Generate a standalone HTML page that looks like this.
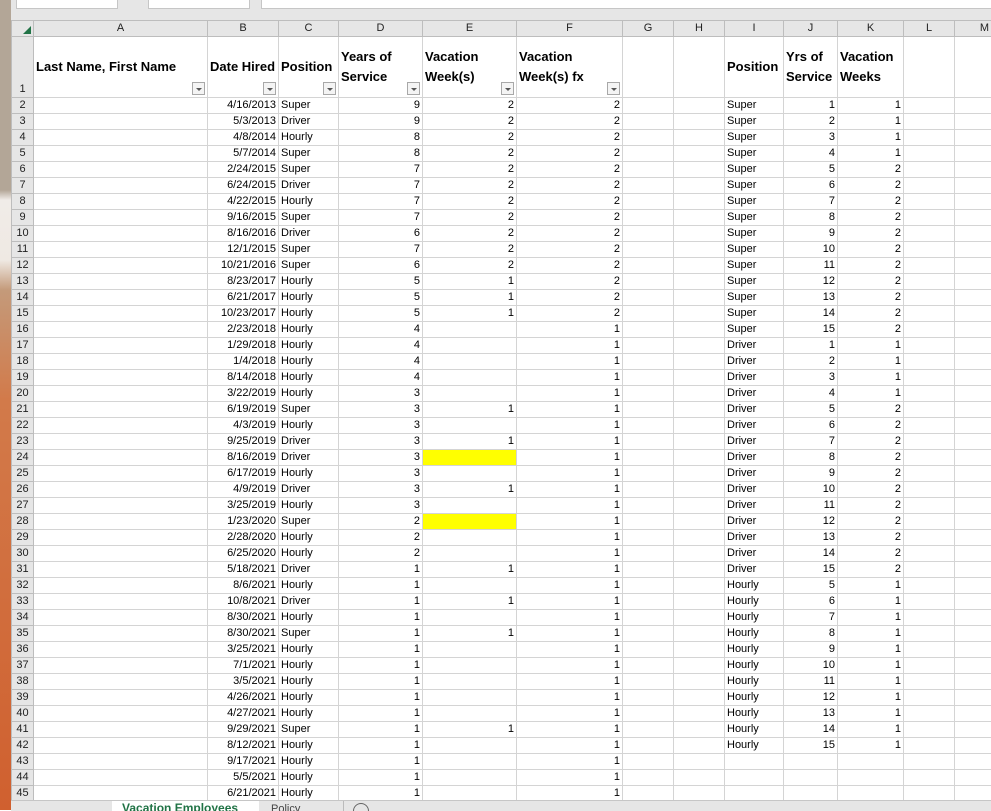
<!DOCTYPE html>
<html><head><meta charset="utf-8"><style>
body{margin:0;width:991px;height:810px;overflow:hidden;background:#fff;font-family:"Liberation Sans",Arial,sans-serif;position:relative}
.lstrip{position:absolute;left:0;top:0;width:11px;height:810px;background:linear-gradient(#b3a697 0,#b3a697 190px,#f0ece8 200px,#efe9e3 260px,#c49a7a 290px,#d27a4a 400px,#d0602f 810px)}
.top{position:absolute;left:11px;top:0;width:980px;height:20px;background:#e6e6e6}
.box{position:absolute;top:0;height:8px;background:#fff;border:1px solid #c6c6c6;border-top:none}
table{position:absolute;left:11px;top:20px;width:1003px;border-collapse:collapse;table-layout:fixed;font-size:11px;color:#000}
td{border:1px solid #d4d4d4;height:15px;padding:0 2px;white-space:nowrap;overflow:hidden;line-height:15px}
tr.ch td{background:#e6e6e6;text-align:center;border-color:#bdbdbd;color:#222}
td.rh{background:#e6e6e6;text-align:center;border-color:#bdbdbd;color:#222;padding:0}
tr.h1 td{height:60px;font-weight:bold;font-size:13px;line-height:20px;vertical-align:middle;position:relative}
.r{text-align:right}
.y{background:#ffff00}
.dd{position:absolute;right:2px;bottom:2px;width:13px;height:13px;border:1px solid #a8a8a8;background:#f4f4f4;box-sizing:border-box}
.dd:after{content:"";position:absolute;left:3px;top:5px;border-left:3px solid transparent;border-right:3px solid transparent;border-top:3px solid #555}
.tabs{position:absolute;left:11px;top:800px;width:980px;height:10px;background:#e6e6e6;border-top:1px solid #c6c6c6;overflow:hidden}
.tab{position:absolute;left:101px;top:-1px;width:147px;height:11px;background:#fff;color:#217346;font-weight:bold;font-size:12px;line-height:16px;padding-left:10px;box-sizing:border-box;overflow:hidden}
</style></head><body>
<div class="lstrip"></div>
<div class="top"><div class="box" style="left:5px;width:100px"></div><div class="box" style="left:137px;width:100px"></div><div class="box" style="left:250px;width:740px"></div></div>
<table>
<colgroup><col style="width:22px"><col style="width:174px"><col style="width:71px"><col style="width:60px"><col style="width:84px"><col style="width:94px"><col style="width:106px"><col style="width:51px"><col style="width:51px"><col style="width:59px"><col style="width:54px"><col style="width:66px"><col style="width:51px"><col style="width:60px"></colgroup>
<tr class="ch"><td style="position:relative"><span style="position:absolute;right:2px;bottom:2px;border-left:8px solid transparent;border-bottom:8px solid #217346"></span></td><td>A</td><td>B</td><td>C</td><td>D</td><td>E</td><td>F</td><td>G</td><td>H</td><td>I</td><td>J</td><td>K</td><td>L</td><td>M</td></tr>
<tr class="h1"><td class="rh" style="vertical-align:bottom;font-weight:normal;font-size:11px;line-height:15px">1</td><td>Last Name, First Name<span class="dd"></span></td><td>Date Hired<span class="dd"></span></td><td>Position<span class="dd"></span></td><td>Years of<br>Service<span class="dd"></span></td><td>Vacation<br>Week(s)<span class="dd"></span></td><td>Vacation<br>Week(s) fx<span class="dd"></span></td><td></td><td></td><td>Position</td><td>Yrs of<br>Service</td><td>Vacation<br>Weeks</td><td></td><td></td></tr>
<tr><td class="rh">2</td><td></td><td class="r">4/16/2013</td><td>Super</td><td class="r">9</td><td class="r">2</td><td class="r">2</td><td></td><td></td><td>Super</td><td class="r">1</td><td class="r">1</td><td></td><td></td></tr>
<tr><td class="rh">3</td><td></td><td class="r">5/3/2013</td><td>Driver</td><td class="r">9</td><td class="r">2</td><td class="r">2</td><td></td><td></td><td>Super</td><td class="r">2</td><td class="r">1</td><td></td><td></td></tr>
<tr><td class="rh">4</td><td></td><td class="r">4/8/2014</td><td>Hourly</td><td class="r">8</td><td class="r">2</td><td class="r">2</td><td></td><td></td><td>Super</td><td class="r">3</td><td class="r">1</td><td></td><td></td></tr>
<tr><td class="rh">5</td><td></td><td class="r">5/7/2014</td><td>Super</td><td class="r">8</td><td class="r">2</td><td class="r">2</td><td></td><td></td><td>Super</td><td class="r">4</td><td class="r">1</td><td></td><td></td></tr>
<tr><td class="rh">6</td><td></td><td class="r">2/24/2015</td><td>Super</td><td class="r">7</td><td class="r">2</td><td class="r">2</td><td></td><td></td><td>Super</td><td class="r">5</td><td class="r">2</td><td></td><td></td></tr>
<tr><td class="rh">7</td><td></td><td class="r">6/24/2015</td><td>Driver</td><td class="r">7</td><td class="r">2</td><td class="r">2</td><td></td><td></td><td>Super</td><td class="r">6</td><td class="r">2</td><td></td><td></td></tr>
<tr><td class="rh">8</td><td></td><td class="r">4/22/2015</td><td>Hourly</td><td class="r">7</td><td class="r">2</td><td class="r">2</td><td></td><td></td><td>Super</td><td class="r">7</td><td class="r">2</td><td></td><td></td></tr>
<tr><td class="rh">9</td><td></td><td class="r">9/16/2015</td><td>Super</td><td class="r">7</td><td class="r">2</td><td class="r">2</td><td></td><td></td><td>Super</td><td class="r">8</td><td class="r">2</td><td></td><td></td></tr>
<tr><td class="rh">10</td><td></td><td class="r">8/16/2016</td><td>Driver</td><td class="r">6</td><td class="r">2</td><td class="r">2</td><td></td><td></td><td>Super</td><td class="r">9</td><td class="r">2</td><td></td><td></td></tr>
<tr><td class="rh">11</td><td></td><td class="r">12/1/2015</td><td>Super</td><td class="r">7</td><td class="r">2</td><td class="r">2</td><td></td><td></td><td>Super</td><td class="r">10</td><td class="r">2</td><td></td><td></td></tr>
<tr><td class="rh">12</td><td></td><td class="r">10/21/2016</td><td>Super</td><td class="r">6</td><td class="r">2</td><td class="r">2</td><td></td><td></td><td>Super</td><td class="r">11</td><td class="r">2</td><td></td><td></td></tr>
<tr><td class="rh">13</td><td></td><td class="r">8/23/2017</td><td>Hourly</td><td class="r">5</td><td class="r">1</td><td class="r">2</td><td></td><td></td><td>Super</td><td class="r">12</td><td class="r">2</td><td></td><td></td></tr>
<tr><td class="rh">14</td><td></td><td class="r">6/21/2017</td><td>Hourly</td><td class="r">5</td><td class="r">1</td><td class="r">2</td><td></td><td></td><td>Super</td><td class="r">13</td><td class="r">2</td><td></td><td></td></tr>
<tr><td class="rh">15</td><td></td><td class="r">10/23/2017</td><td>Hourly</td><td class="r">5</td><td class="r">1</td><td class="r">2</td><td></td><td></td><td>Super</td><td class="r">14</td><td class="r">2</td><td></td><td></td></tr>
<tr><td class="rh">16</td><td></td><td class="r">2/23/2018</td><td>Hourly</td><td class="r">4</td><td></td><td class="r">1</td><td></td><td></td><td>Super</td><td class="r">15</td><td class="r">2</td><td></td><td></td></tr>
<tr><td class="rh">17</td><td></td><td class="r">1/29/2018</td><td>Hourly</td><td class="r">4</td><td></td><td class="r">1</td><td></td><td></td><td>Driver</td><td class="r">1</td><td class="r">1</td><td></td><td></td></tr>
<tr><td class="rh">18</td><td></td><td class="r">1/4/2018</td><td>Hourly</td><td class="r">4</td><td></td><td class="r">1</td><td></td><td></td><td>Driver</td><td class="r">2</td><td class="r">1</td><td></td><td></td></tr>
<tr><td class="rh">19</td><td></td><td class="r">8/14/2018</td><td>Hourly</td><td class="r">4</td><td></td><td class="r">1</td><td></td><td></td><td>Driver</td><td class="r">3</td><td class="r">1</td><td></td><td></td></tr>
<tr><td class="rh">20</td><td></td><td class="r">3/22/2019</td><td>Hourly</td><td class="r">3</td><td></td><td class="r">1</td><td></td><td></td><td>Driver</td><td class="r">4</td><td class="r">1</td><td></td><td></td></tr>
<tr><td class="rh">21</td><td></td><td class="r">6/19/2019</td><td>Super</td><td class="r">3</td><td class="r">1</td><td class="r">1</td><td></td><td></td><td>Driver</td><td class="r">5</td><td class="r">2</td><td></td><td></td></tr>
<tr><td class="rh">22</td><td></td><td class="r">4/3/2019</td><td>Hourly</td><td class="r">3</td><td></td><td class="r">1</td><td></td><td></td><td>Driver</td><td class="r">6</td><td class="r">2</td><td></td><td></td></tr>
<tr><td class="rh">23</td><td></td><td class="r">9/25/2019</td><td>Driver</td><td class="r">3</td><td class="r">1</td><td class="r">1</td><td></td><td></td><td>Driver</td><td class="r">7</td><td class="r">2</td><td></td><td></td></tr>
<tr><td class="rh">24</td><td></td><td class="r">8/16/2019</td><td>Driver</td><td class="r">3</td><td class="y"></td><td class="r">1</td><td></td><td></td><td>Driver</td><td class="r">8</td><td class="r">2</td><td></td><td></td></tr>
<tr><td class="rh">25</td><td></td><td class="r">6/17/2019</td><td>Hourly</td><td class="r">3</td><td></td><td class="r">1</td><td></td><td></td><td>Driver</td><td class="r">9</td><td class="r">2</td><td></td><td></td></tr>
<tr><td class="rh">26</td><td></td><td class="r">4/9/2019</td><td>Driver</td><td class="r">3</td><td class="r">1</td><td class="r">1</td><td></td><td></td><td>Driver</td><td class="r">10</td><td class="r">2</td><td></td><td></td></tr>
<tr><td class="rh">27</td><td></td><td class="r">3/25/2019</td><td>Hourly</td><td class="r">3</td><td></td><td class="r">1</td><td></td><td></td><td>Driver</td><td class="r">11</td><td class="r">2</td><td></td><td></td></tr>
<tr><td class="rh">28</td><td></td><td class="r">1/23/2020</td><td>Super</td><td class="r">2</td><td class="y"></td><td class="r">1</td><td></td><td></td><td>Driver</td><td class="r">12</td><td class="r">2</td><td></td><td></td></tr>
<tr><td class="rh">29</td><td></td><td class="r">2/28/2020</td><td>Hourly</td><td class="r">2</td><td></td><td class="r">1</td><td></td><td></td><td>Driver</td><td class="r">13</td><td class="r">2</td><td></td><td></td></tr>
<tr><td class="rh">30</td><td></td><td class="r">6/25/2020</td><td>Hourly</td><td class="r">2</td><td></td><td class="r">1</td><td></td><td></td><td>Driver</td><td class="r">14</td><td class="r">2</td><td></td><td></td></tr>
<tr><td class="rh">31</td><td></td><td class="r">5/18/2021</td><td>Driver</td><td class="r">1</td><td class="r">1</td><td class="r">1</td><td></td><td></td><td>Driver</td><td class="r">15</td><td class="r">2</td><td></td><td></td></tr>
<tr><td class="rh">32</td><td></td><td class="r">8/6/2021</td><td>Hourly</td><td class="r">1</td><td></td><td class="r">1</td><td></td><td></td><td>Hourly</td><td class="r">5</td><td class="r">1</td><td></td><td></td></tr>
<tr><td class="rh">33</td><td></td><td class="r">10/8/2021</td><td>Driver</td><td class="r">1</td><td class="r">1</td><td class="r">1</td><td></td><td></td><td>Hourly</td><td class="r">6</td><td class="r">1</td><td></td><td></td></tr>
<tr><td class="rh">34</td><td></td><td class="r">8/30/2021</td><td>Hourly</td><td class="r">1</td><td></td><td class="r">1</td><td></td><td></td><td>Hourly</td><td class="r">7</td><td class="r">1</td><td></td><td></td></tr>
<tr><td class="rh">35</td><td></td><td class="r">8/30/2021</td><td>Super</td><td class="r">1</td><td class="r">1</td><td class="r">1</td><td></td><td></td><td>Hourly</td><td class="r">8</td><td class="r">1</td><td></td><td></td></tr>
<tr><td class="rh">36</td><td></td><td class="r">3/25/2021</td><td>Hourly</td><td class="r">1</td><td></td><td class="r">1</td><td></td><td></td><td>Hourly</td><td class="r">9</td><td class="r">1</td><td></td><td></td></tr>
<tr><td class="rh">37</td><td></td><td class="r">7/1/2021</td><td>Hourly</td><td class="r">1</td><td></td><td class="r">1</td><td></td><td></td><td>Hourly</td><td class="r">10</td><td class="r">1</td><td></td><td></td></tr>
<tr><td class="rh">38</td><td></td><td class="r">3/5/2021</td><td>Hourly</td><td class="r">1</td><td></td><td class="r">1</td><td></td><td></td><td>Hourly</td><td class="r">11</td><td class="r">1</td><td></td><td></td></tr>
<tr><td class="rh">39</td><td></td><td class="r">4/26/2021</td><td>Hourly</td><td class="r">1</td><td></td><td class="r">1</td><td></td><td></td><td>Hourly</td><td class="r">12</td><td class="r">1</td><td></td><td></td></tr>
<tr><td class="rh">40</td><td></td><td class="r">4/27/2021</td><td>Hourly</td><td class="r">1</td><td></td><td class="r">1</td><td></td><td></td><td>Hourly</td><td class="r">13</td><td class="r">1</td><td></td><td></td></tr>
<tr><td class="rh">41</td><td></td><td class="r">9/29/2021</td><td>Super</td><td class="r">1</td><td class="r">1</td><td class="r">1</td><td></td><td></td><td>Hourly</td><td class="r">14</td><td class="r">1</td><td></td><td></td></tr>
<tr><td class="rh">42</td><td></td><td class="r">8/12/2021</td><td>Hourly</td><td class="r">1</td><td></td><td class="r">1</td><td></td><td></td><td>Hourly</td><td class="r">15</td><td class="r">1</td><td></td><td></td></tr>
<tr><td class="rh">43</td><td></td><td class="r">9/17/2021</td><td>Hourly</td><td class="r">1</td><td></td><td class="r">1</td><td></td><td></td><td></td><td></td><td></td><td></td><td></td></tr>
<tr><td class="rh">44</td><td></td><td class="r">5/5/2021</td><td>Hourly</td><td class="r">1</td><td></td><td class="r">1</td><td></td><td></td><td></td><td></td><td></td><td></td><td></td></tr>
<tr><td class="rh">45</td><td></td><td class="r">6/21/2021</td><td>Hourly</td><td class="r">1</td><td></td><td class="r">1</td><td></td><td></td><td></td><td></td><td></td><td></td><td></td></tr>
</table>
<div class="tabs"><div class="tab">Vacation Employees</div><div style="position:absolute;left:248px;top:0;width:72px;height:10px;border-right:1px solid #bbb;font-size:11px;line-height:16px;padding-left:12px;color:#444;overflow:hidden">Policy</div><div style="position:absolute;left:342px;top:2px;width:14px;height:14px;border:1px solid #666;border-radius:50%"></div></div>
</body></html>
